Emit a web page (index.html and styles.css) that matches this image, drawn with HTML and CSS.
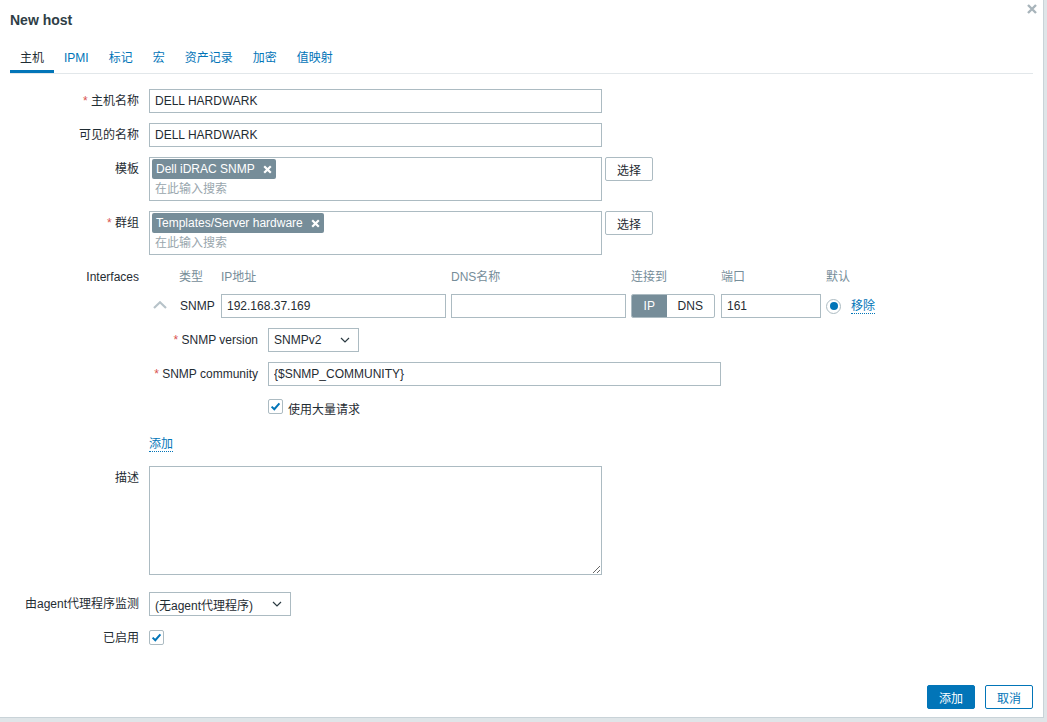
FILE: index.html
```html
<!DOCTYPE html>
<html lang="zh">
<head>
<meta charset="utf-8">
<title>New host</title>
<link rel="stylesheet" href="styles.css">
</head>
<body>
<div class="dialog">
  <div class="dlg-head">
    <h4 class="dlg-title">New host</h4>
    <button class="close" type="button" aria-label="close">
      <svg width="10" height="10" viewBox="0 0 10 10"><path d="M1 1L9 9M9 1L1 9" stroke="#a8b4bb" stroke-width="2.4" fill="none"/></svg>
    </button>
  </div>
  <ul class="tabs">
    <li class="tab active">主机</li>
    <li class="tab">IPMI</li>
    <li class="tab">标记</li>
    <li class="tab">宏</li>
    <li class="tab">资产记录</li>
    <li class="tab">加密</li>
    <li class="tab">值映射</li>
  </ul>
  <div class="form">
    <div class="row">
      <div class="lbl"><span class="req">*</span> 主机名称</div>
      <div class="field"><input class="text w453" type="text" value="DELL HARDWARK"></div>
    </div>
    <div class="row">
      <div class="lbl">可见的名称</div>
      <div class="field"><input class="text w453" type="text" value="DELL HARDWARK"></div>
    </div>
    <div class="row">
      <div class="lbl">模板</div>
      <div class="field ms-field">
        <div class="multiselect">
          <div class="tags"><span class="tag">Dell iDRAC SNMP<svg class="tag-x" width="9" height="9" viewBox="0 0 9 9"><path d="M1.2 1.2L7.8 7.8M7.8 1.2L1.2 7.8" stroke="#fff" stroke-width="2.2" fill="none"/></svg></span></div>
          <div class="ph">在此输入搜索</div>
        </div>
        <button class="btn-grey" type="button">选择</button>
      </div>
    </div>
    <div class="row">
      <div class="lbl"><span class="req">*</span> 群组</div>
      <div class="field ms-field">
        <div class="multiselect">
          <div class="tags"><span class="tag">Templates/Server hardware<svg class="tag-x" width="9" height="9" viewBox="0 0 9 9"><path d="M1.2 1.2L7.8 7.8M7.8 1.2L1.2 7.8" stroke="#fff" stroke-width="2.2" fill="none"/></svg></span></div>
          <div class="ph">在此输入搜索</div>
        </div>
        <button class="btn-grey" type="button">选择</button>
      </div>
    </div>
    <div class="row row-iface">
      <div class="lbl lbl-iface">Interfaces</div>
      <div class="field">
        <div class="iface-grid iface-head">
          <div></div>
          <div>类型</div>
          <div>IP地址</div>
          <div>DNS名称</div>
          <div>连接到</div>
          <div>端口</div>
          <div>默认</div>
        </div>
        <div class="iface-grid iface-row">
          <div class="arrow"><svg width="14" height="8" viewBox="0 0 14 8"><path d="M1 7L7 1.3L13 7" stroke="#b7c3c9" stroke-width="2.2" fill="none"/></svg></div>
          <div class="type">SNMP</div>
          <div><input class="text w225" type="text" value="192.168.37.169"></div>
          <div><input class="text w175" type="text" value=""></div>
          <div class="toggle"><span class="seg on">IP</span><span class="seg">DNS</span></div>
          <div><input class="text w100" type="text" value="161"></div>
          <div class="def"><span class="radio"><span class="dot"></span></span><a class="link">移除</a></div>
        </div>
        <div class="sub">
          <div class="sub-row">
            <div class="sub-lbl"><span class="req">*</span> SNMP version</div>
            <div class="select w91"><span>SNMPv2</span><svg width="10" height="6" viewBox="0 0 10 6"><path d="M1 1L5 5L9 1" stroke="#2b3a42" stroke-width="1.2" fill="none"/></svg></div>
          </div>
          <div class="sub-row">
            <div class="sub-lbl"><span class="req">*</span> SNMP community</div>
            <div><input class="text w453" type="text" value="{$SNMP_COMMUNITY}"></div>
          </div>
          <div class="sub-row">
            <div></div>
            <div class="check-line"><span class="checkbox"><svg width="13" height="13" viewBox="0 0 13 13"><path d="M2.6 6.6L5.3 9.2L10.4 3.4" stroke="#0275b8" stroke-width="2" fill="none"/></svg></span><span>使用大量请求</span></div>
          </div>
        </div>
      </div>
    </div>
    <div class="row row-add">
      <div class="lbl"></div>
      <div class="field"><a class="link">添加</a></div>
    </div>
    <div class="row row-desc">
      <div class="lbl">描述</div>
      <div class="field"><textarea class="textarea"></textarea></div>
    </div>
    <div class="row">
      <div class="lbl">由agent代理程序监测</div>
      <div class="field"><div class="select w142"><span>(无agent代理程序)</span><svg width="10" height="6" viewBox="0 0 10 6"><path d="M1 1L5 5L9 1" stroke="#2b3a42" stroke-width="1.2" fill="none"/></svg></div></div>
    </div>
    <div class="row">
      <div class="lbl">已启用</div>
      <div class="field"><span class="checkbox"><svg width="13" height="13" viewBox="0 0 13 13"><path d="M2.6 6.6L5.3 9.2L10.4 3.4" stroke="#0275b8" stroke-width="2" fill="none"/></svg></span></div>
    </div>
  </div>
  <div class="dlg-foot">
    <button class="btn primary" type="button">添加</button>
    <button class="btn alt" type="button">取消</button>
  </div>
</div>
</body>
</html>
```

FILE: styles.css
```css
* { box-sizing: border-box; }
html, body { margin: 0; padding: 0; }
body {
  background: #dfe5e8;
  font-family: "Liberation Sans", Arial, "Noto Sans CJK SC", sans-serif;
  font-size: 12px;
  color: #1f2c33;
  width: 1047px;
  height: 722px;
  overflow: hidden;
}
.dialog {
  position: relative;
  width: 1044px;
  height: 718px;
  background: #fff;
  border-right: 1px solid #c9d3d8;
  border-bottom: 1px solid #c9d3d8;
  display: flex;
  flex-direction: column;
}
.dlg-head { padding: 10px 10px 0; }
.dlg-title {
  margin: 0;
  font-size: 14px;
  line-height: 20px;
  font-weight: bold;
  color: #2f3e46;
}
.close {
  position: absolute;
  top: 4px;
  right: 6px;
  border: 0;
  background: none;
  padding: 0;
  width: 10px;
  height: 10px;
  line-height: 0;
}
.tabs {
  list-style: none;
  margin: 16px 10px 0;
  padding: 0;
  display: flex;
  border-bottom: 1px solid #e2e7ea;
}
.tab {
  padding: 0 10px;
  line-height: 24px;
  border-bottom: 3px solid transparent;
  color: #0275b8;
}
.tab.active {
  color: #1f2c33;
  border-bottom-color: #0275b8;
}
.form { padding: 15px 10px 0; }
.row {
  display: grid;
  grid-template-columns: 129px 1fr;
  column-gap: 10px;
  margin-bottom: 10px;
}
.lbl {
  text-align: right;
  line-height: 24px;
  white-space: nowrap;
}
.req { color: #d9534f; }
.field { min-width: 0; }
.text {
  display: block;
  height: 24px;
  border: 1px solid #acbbc2;
  border-radius: 0;
  padding: 0 5px;
  margin: 0;
  font: inherit;
  color: #1f2c33;
  background: #fff;
  outline: none;
}
.w453 { width: 453px; }
.w225 { width: 225px; }
.w175 { width: 175px; }
.w100 { width: 100px; }
.ms-field { display: flex; align-items: flex-start; gap: 3px; }
.multiselect {
  width: 453px;
  height: 44px;
  border: 1px solid #acbbc2;
  padding: 1px 2px;
}
.tags { display: flex; height: 20px; }
.tag {
  display: inline-flex;
  align-items: center;
  height: 20px;
  padding: 0 4px 0 4px;
  background: #768d99;
  color: #fff;
  border-radius: 2px;
  white-space: nowrap;
}
.tag-x { margin-left: 8px; }
.ph {
  color: #99a6ad;
  line-height: 20px;
  padding-left: 3px;
}
.btn-grey {
  width: 48px;
  height: 24px;
  border: 1px solid #acbbc2;
  border-radius: 2px;
  background: #fff;
  font: inherit;
  color: #1f2c33;
  padding: 0;
}
.lbl-iface { line-height: 22px; padding-top: 1px; }
.iface-grid {
  display: grid;
  grid-template-columns: 30px 42px 230px 180px 90px 105px auto;
  align-items: center;
}
.iface-head {
  line-height: 22px;
  padding-top: 1px;
  color: #768d99;
  margin-bottom: 6px;
}
.iface-row { height: 24px; margin-bottom: 10px; }
.arrow { padding-left: 4px; line-height: 0; padding-bottom: 3px; }
.type { padding-left: 1px; }
.toggle {
  display: flex;
  width: 84px;
  height: 24px;
  border: 1px solid #acbbc2;
  border-radius: 2px;
  overflow: hidden;
}
.seg {
  display: flex;
  align-items: center;
  justify-content: center;
  width: 48px;
  color: #1f2c33;
}
.seg.on {
  width: 35px;
  background: #768d99;
  color: #fff;
}
.def { display: flex; align-items: center; }
.radio {
  width: 15px;
  height: 15px;
  border: 1px solid #acbbc2;
  border-radius: 50%;
  display: flex;
  align-items: center;
  justify-content: center;
}
.dot {
  width: 8px;
  height: 8px;
  border-radius: 50%;
  background: #0275b8;
}
.def .link { margin-left: 10px; }
.link {
  color: #0275b8;
  border-bottom: 1px dotted #0275b8;
  text-decoration: none;
  line-height: 14px;
}
.sub-row {
  display: grid;
  grid-template-columns: 109px 1fr;
  column-gap: 10px;
  height: 24px;
  align-items: center;
  margin-bottom: 10px;
}
.sub-row:last-child { margin-bottom: 0; }
.sub-lbl { text-align: right; white-space: nowrap; }
.select {
  display: flex;
  align-items: center;
  justify-content: space-between;
  height: 24px;
  border: 1px solid #acbbc2;
  padding: 0 8px 0 5px;
  background: #fff;
}
.w91 { width: 91px; }
.w142 { width: 142px; }
.check-line { display: flex; align-items: center; gap: 5px; }
.checkbox {
  display: inline-flex;
  align-items: center;
  justify-content: center;
  width: 15px;
  height: 15px;
  border: 1px solid #acbbc2;
  border-radius: 2px;
  background: #fff;
  vertical-align: middle;
  margin-top: 4px;
}
.check-line .checkbox { margin-top: -4px; }
.row-add { margin-bottom: 10px; }
.row-add .field { line-height: 24px; padding-top: 2px; }
.row-desc { margin-bottom: 17px; }
.textarea {
  display: block;
  width: 453px;
  height: 109px;
  border: 1px solid #acbbc2;
  margin: 0;
  padding: 4px 5px;
  font: inherit;
  resize: both;
  outline: none;
}
.dlg-foot {
  margin-top: auto;
  display: flex;
  justify-content: flex-end;
  gap: 10px;
  padding: 0 10px 8px;
}
.btn {
  width: 48px;
  height: 24px;
  border-radius: 2px;
  font: inherit;
  padding: 0;
}
.btn.primary {
  background: #0275b8;
  border: 1px solid #0275b8;
  color: #fff;
}
.btn.alt {
  background: #fff;
  border: 1px solid #0275b8;
  color: #0275b8;
}
```
